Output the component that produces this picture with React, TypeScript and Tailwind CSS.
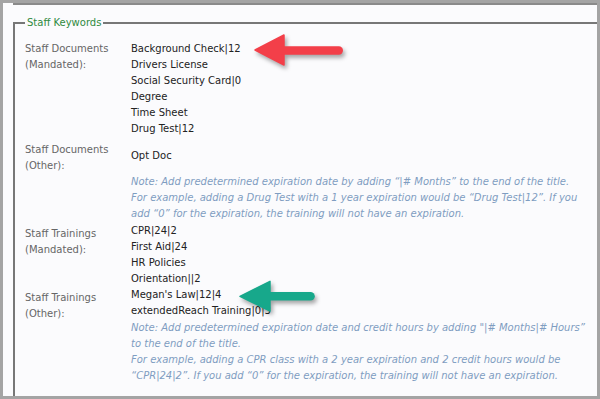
import React from "react";

const font = { fontFamily: '"DejaVu Sans", Verdana, sans-serif' };

const Label = ({ lines, className = "" }: { lines: string[]; className?: string }) => (
  <div className={`text-[#666] ${className}`}>
    {lines.map((l) => (
      <div key={l}>{l}</div>
    ))}
  </div>
);

const Values = ({ items }: { items: string[] }) => (
  <>
    {items.map((v) => (
      <div key={v} className="whitespace-nowrap text-[#222]">
        {v}
      </div>
    ))}
  </>
);

const Note = ({ lines, className = "" }: { lines: string[]; className?: string }) => (
  <div className={`italic text-[#7f9dc1] ${className}`}>
    {lines.map((l) => (
      <div key={l} className="whitespace-nowrap">
        {l}
      </div>
    ))}
  </div>
);

const Arrows = () => (
  <svg className="pointer-events-none absolute inset-0" width="600" height="399">
    <g className="drop-shadow-[2px_3px_2px_rgba(0,0,0,0.35)]">
      <polygon points="252,47 281,32 281,62" fill="#f33f49" strokeLinejoin="round" stroke="#f33f49" strokeWidth="1.5" />
      <path d="M278 43.3 H335.8 A4.2 4.2 0 0 1 335.8 51.7 H278 Z" fill="#f33f49" />
    </g>
    <g className="drop-shadow-[2px_3px_2px_rgba(0,0,0,0.35)]">
      <polygon points="237,293.3 267,278.3 267,308" fill="#17a88b" strokeLinejoin="round" stroke="#17a88b" strokeWidth="1.5" />
      <path d="M264 289 H307.5 A4.3 4.3 0 0 1 307.5 297.6 H264 Z" fill="#17a88b" />
    </g>
  </svg>
);

export default function App() {
  return (
    <div
      className="relative h-[399px] w-[600px] overflow-hidden border-[3px] border-[#a4a4a4] bg-[#fbfbfd] text-[10px] leading-[16px]"
      style={font}
    >
      <div className="ml-[10px] h-[2px] border-b-2 border-l-2 border-[#8a8a8a]" />
      <fieldset className="-mr-[4px] ml-[10px] mt-[10px] border-2 border-[#777] pb-[12px] pl-[10px]">
        <legend className="px-[2px] text-[#2f8a3f]">Staff Keywords</legend>
        <div className="grid grid-cols-[106px_1fr] pt-[10px]">
          <Label lines={["Staff Documents", "(Mandated):"]} />
          <div>
            <Values
              items={[
                "Background Check|12",
                "Drivers License",
                "Social Security Card|0",
                "Degree",
                "Time Sheet",
                "Drug Test|12",
              ]}
            />
          </div>

          <Label lines={["Staff Documents", "(Other):"]} className="mt-[5px]" />
          <div className="mt-[5px] pt-[6px]">
            <Values items={["Opt Doc"]} />
            <Note
              className="mt-[10px]"
              lines={[
                "Note: Add predetermined expiration date by adding \u201c|# Months\u201d to the end of the title.",
                "For example, adding a Drug Test with a 1 year expiration would be \u201cDrug Test|12\u201d. If you",
                "add \u201c0\u201d for the expiration, the training will not have an expiration.",
              ]}
            />
          </div>

          <Label lines={["Staff Trainings", "(Mandated):"]} className="mt-[4px]" />
          <div className="mt-[1px]">
            <Values items={["CPR|24|2", "First Aid|24", "HR Policies", "Orientation||2"]} />
          </div>

          <Label lines={["Staff Trainings", "(Other):"]} className="mt-[3px]" />
          <div>
            <Values items={["Megan's Law|12|4", "extendedReach Training|0|3"]} />
            <Note
              className="mt-[1px]"
              lines={[
                "Note: Add predetermined expiration date and credit hours by adding \"|# Months|# Hours\u201d",
                "to the end of the title.",
                "For example, adding a CPR class with a 2 year expiration and 2 credit hours would be",
                "\u201cCPR|24|2\u201d. If you add \u201c0\u201d for the expiration, the training will not have an expiration.",
              ]}
            />
          </div>
        </div>
      </fieldset>
      <Arrows />
    </div>
  );
}
